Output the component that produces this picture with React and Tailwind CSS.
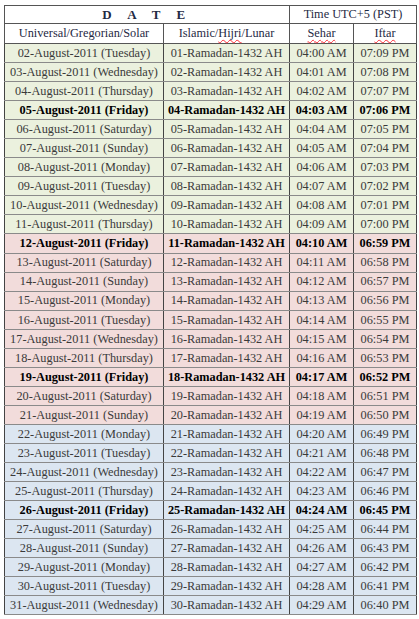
import React from 'react';

const days = ['Monday', 'Tuesday', 'Wednesday', 'Thursday', 'Friday', 'Saturday', 'Sunday'];

function pad(n) {
    return n < 10 ? '0' + n : '' + n;
}

const rows = [];
for (let d = 2; d <= 31; d++) {
    const i = d - 2;
    let ih = 7;
    let im = 9 - i;
    if (im < 0) {
        ih = 6;
        im = 60 + im;
    }
    rows.push({
        date: `${pad(d)}-August-2011 (${days[(d - 1) % 7]})`,
        hijri: `${pad(i + 1)}-Ramadan-1432 AH`,
        sehar: `04:${pad(i)} AM`,
        iftar: `${pad(ih)}:${pad(im)} PM`,
        bold: (d - 5) % 7 === 0,
        bg: i < 10 ? 'bg-[#ebf1de]' : i < 20 ? 'bg-[#f2dcdb]' : 'bg-[#dce6f1]',
    });
}

function App() {
    return (
        <div className="w-[419px] h-[619px] bg-white pt-[5px] pl-[4px]" style={{ fontFamily: '"Liberation Serif", "Times New Roman", serif' }}>
            <table className="border-collapse text-[12.3px] leading-none">
                <thead>
                    <tr className="h-[18px] bg-white text-[#1f2a44]">
                        <th colSpan={2} className="border border-[#555] font-bold tracking-[0.5em] text-center text-[13px]">
                            D A T E
                        </th>
                        <th colSpan={2} className="border border-[#555] font-normal text-center">
                            Time UTC+5 (PST)
                        </th>
                    </tr>
                    <tr className="h-[20px] bg-white text-[#1f2a44]">
                        <th className="w-[159px] border border-[#555] font-normal text-center">Universal/Gregorian/Solar</th>
                        <th className="w-[126px] border border-[#555] font-normal text-center">
                            Islamic/<span className="underline decoration-wavy decoration-red-500 decoration-1 underline-offset-2">Hijri</span>/Lunar
                        </th>
                        <th className="w-[64px] border border-[#555] font-normal text-center">
                            <span className="underline decoration-wavy decoration-red-500 decoration-1 underline-offset-2">Sehar</span>
                        </th>
                        <th className="w-[63px] border border-[#555] font-normal text-center">
                            <span className="underline decoration-wavy decoration-red-500 decoration-1 underline-offset-2">Iftar</span>
                        </th>
                    </tr>
                </thead>
                <tbody>
                    {rows.map((r, index) => (
                        <tr key={index} className={`h-[19.05px] ${r.bg} ${r.bold ? 'font-bold text-black' : 'text-[#3a3a3a]'}`}>
                            <td className="border-y border-y-[#8a8a8a] border-x border-x-[#444] text-center whitespace-nowrap">{r.date}</td>
                            <td className="border-y border-y-[#8a8a8a] border-x border-x-[#444] text-center whitespace-nowrap">{r.hijri}</td>
                            <td className="border-y border-y-[#8a8a8a] border-x border-x-[#444] text-center whitespace-nowrap">{r.sehar}</td>
                            <td className="border-y border-y-[#8a8a8a] border-x border-x-[#444] text-center whitespace-nowrap">{r.iftar}</td>
                        </tr>
                    ))}
                </tbody>
            </table>
        </div>
    );
}

export default App;
